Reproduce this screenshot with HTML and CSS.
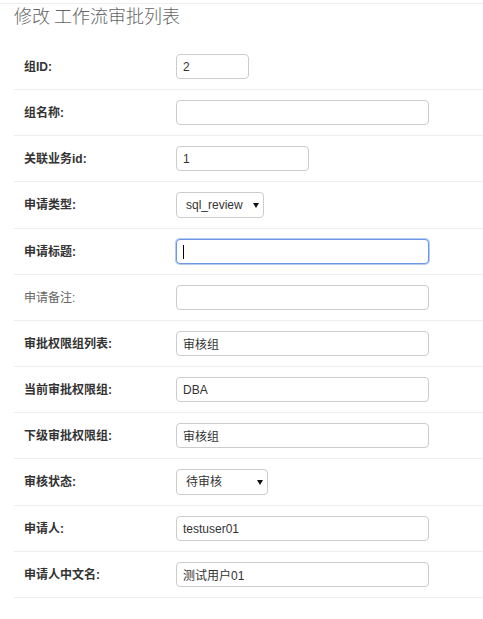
FILE: index.html
```html
<!DOCTYPE html>
<html lang="zh-CN">
<head>
<meta charset="utf-8">
<title>修改 工作流审批列表</title>
<link rel="stylesheet" href="styles.css">
</head>
<body>
<div class="topbar"></div>
<div class="content">
  <h1 class="title">修改 工作流审批列表</h1>
  <form class="form">
    <div class="row">
      <label class="lbl req">组ID:</label>
      <input class="inp w-s" type="text" value="2">
    </div>
    <div class="row">
      <label class="lbl req">组名称:</label>
      <input class="inp w-l" type="text" value="">
    </div>
    <div class="row">
      <label class="lbl req">关联业务id:</label>
      <input class="inp w-m" type="text" value="1">
    </div>
    <div class="row">
      <label class="lbl req">申请类型:</label>
      <span class="sel-wrap"><select class="sel sel-a"><option>sql_review</option></select></span>
    </div>
    <div class="row">
      <label class="lbl req">申请标题:</label>
      <span class="focus-wrap"><input class="inp w-l focused" type="text" value=""></span>
    </div>
    <div class="row">
      <label class="lbl opt">申请备注:</label>
      <input class="inp w-l" type="text" value="">
    </div>
    <div class="row">
      <label class="lbl req">审批权限组列表:</label>
      <input class="inp w-l" type="text" value="审核组">
    </div>
    <div class="row">
      <label class="lbl req">当前审批权限组:</label>
      <input class="inp w-l" type="text" value="DBA">
    </div>
    <div class="row">
      <label class="lbl req">下级审批权限组:</label>
      <input class="inp w-l" type="text" value="审核组">
    </div>
    <div class="row">
      <label class="lbl req">审核状态:</label>
      <span class="sel-wrap"><select class="sel sel-b"><option>待审核</option></select></span>
    </div>
    <div class="row">
      <label class="lbl req">申请人:</label>
      <input class="inp w-l" type="text" value="testuser01">
    </div>
    <div class="row">
      <label class="lbl req">申请人中文名:</label>
      <input class="inp w-l" type="text" value="测试用户01">
    </div>
  </form>
</div>
</body>
</html>
```
FILE: styles.css
```css
html, body {
  margin: 0;
  padding: 0;
  background: #fff;
}
body {
  font-family: "Liberation Sans", "Noto Sans CJK SC", Arial, sans-serif;
  color: #333;
}
.topbar {
  height: 3px;
  border-bottom: 1px solid #eee;
}
.content {
  padding-left: 14px;
}
.title {
  margin: 0 0 18px 0;
  font-size: 18px;
  line-height: 22px;
  font-weight: 300;
  color: #666;
  font-family: "Noto Sans CJK SC", "Liberation Sans", sans-serif;
}
.form {
  margin: 0;
}
.row {
  display: flex;
  align-items: center;
  padding: 10px 10px 10px 10px;
  border-bottom: 1px solid #eee;
}
.lbl {
  width: 152px;
  flex: none;
  font-size: 12px;
  line-height: 16px;
}
.lbl.req {
  font-weight: bold;
  color: #333;
}
.lbl.opt {
  font-weight: normal;
  color: #666;
}
.inp {
  box-sizing: border-box;
  height: 25px;
  margin: 0;
  padding: 0 6px;
  border: 1px solid #ccc;
  border-radius: 4px;
  font-family: "Liberation Sans", "Noto Sans CJK SC", Arial, sans-serif;
  font-size: 12px;
  color: #333;
  background: #fff;
  outline: none;
}
.w-s { width: 73px; }
.w-m { width: 133px; }
.w-l { width: 253px; }
.focus-wrap {
  position: relative;
  display: inline-block;
  line-height: 0;
}
.inp.focused {
  border-color: #6d97e5;
  box-shadow: 0 0 0 1px rgba(120, 160, 232, 0.55);
}
.focus-wrap::after {
  content: "";
  position: absolute;
  left: 7px;
  top: 6px;
  width: 1px;
  height: 14px;
  background: #000;
}
.sel-wrap {
  position: relative;
  display: inline-block;
  line-height: 0;
}
.sel {
  box-sizing: border-box;
  -webkit-appearance: none;
  appearance: none;
  height: 26px;
  margin: 0;
  padding: 0 0 0 9px;
  border: 1px solid #ccc;
  border-radius: 4px;
  background: #fff;
  font-family: "Liberation Sans", "Noto Sans CJK SC", Arial, sans-serif;
  font-size: 12px;
  color: #333;
  outline: none;
}
.sel-a { width: 88px; }
.sel-b { width: 92px; }
.sel-wrap::after {
  content: "";
  position: absolute;
  right: 5px;
  top: 11px;
  width: 0;
  height: 0;
  border-left: 3px solid transparent;
  border-right: 3px solid transparent;
  border-top: 5px solid #111;
  pointer-events: none;
}
```
